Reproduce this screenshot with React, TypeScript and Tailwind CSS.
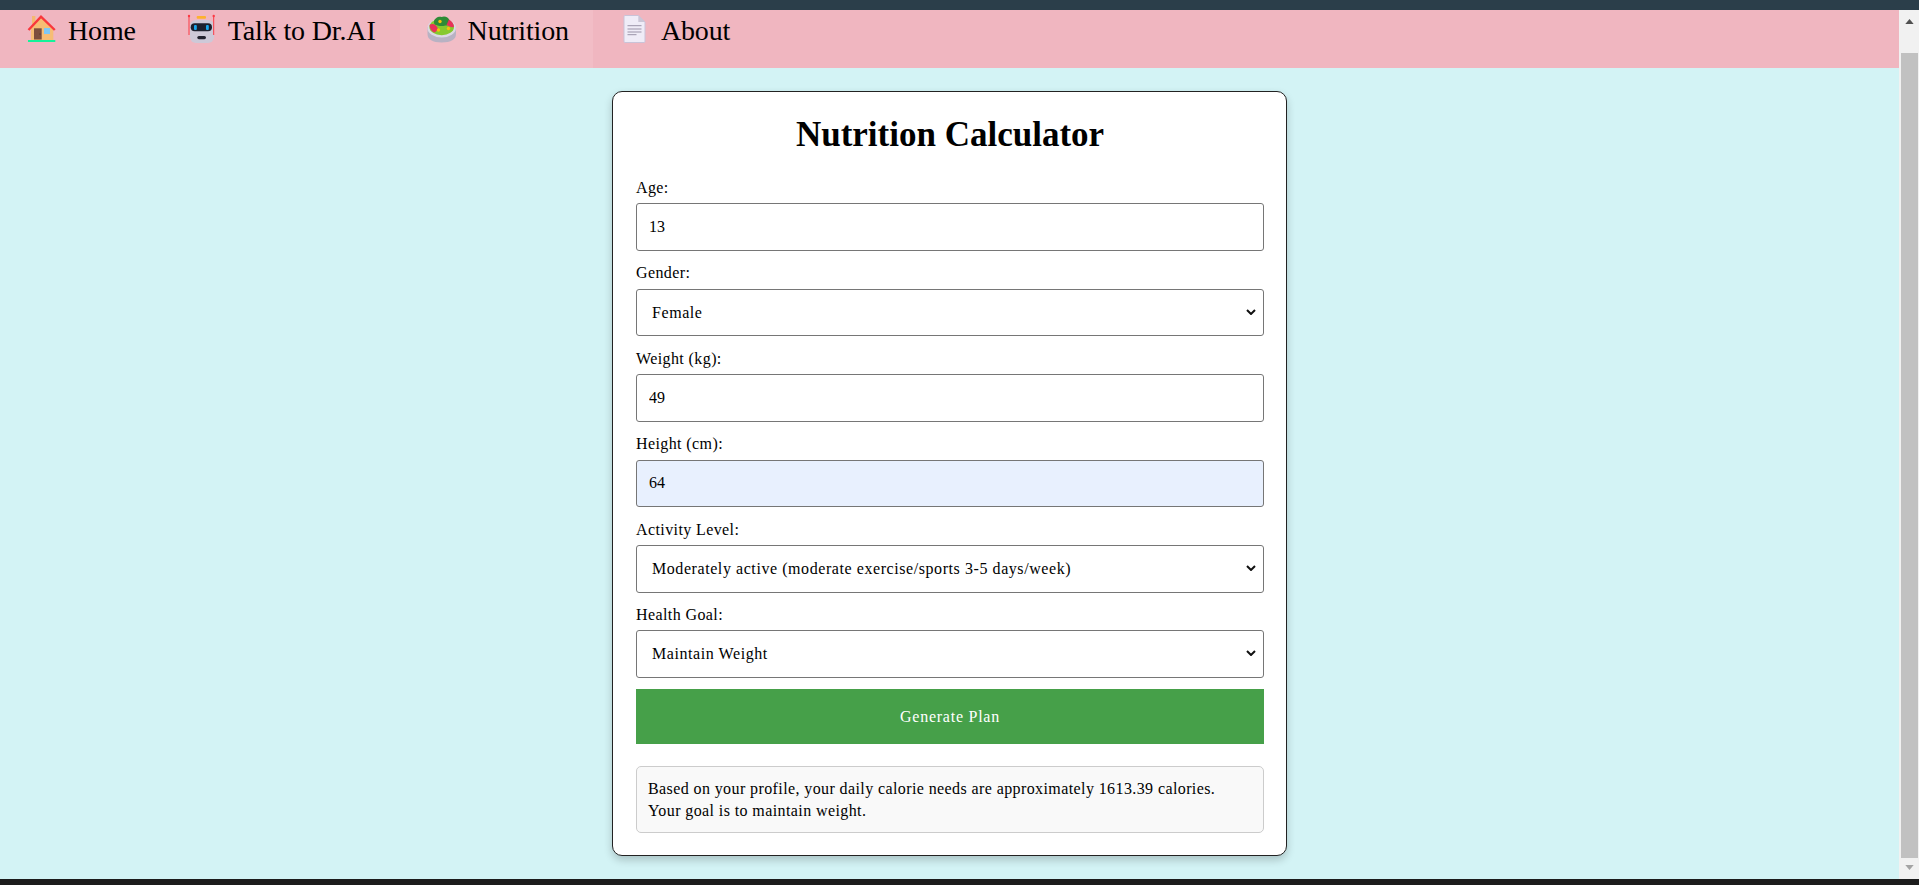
const serif = { fontFamily: '"Liberation Serif", "Times New Roman", serif' }

function HomeIcon() {
  return (
    <svg viewBox="0 0 30 30" className="w-[30px] h-[30px] shrink-0">
      <rect x="5" y="2" width="3.4" height="11" fill="#f4b870" />
      <path d="M14 2.7 26.3 14.3V26H4V14.3Z" fill="#f6bd74" />
      <rect x="7" y="14.3" width="7.7" height="11.2" fill="#7d4f3d" />
      <circle cx="13" cy="20" r="0.5" fill="#3d2418" />
      <rect x="17" y="14" width="6" height="6" fill="#7ec8f5" />
      <path d="M1.5 16 14 2.6 27.8 16" fill="none" stroke="#f9373c" strokeWidth="2.4" />
      <rect x="1" y="26" width="27.3" height="2" fill="#14f29a" />
    </svg>
  )
}

function RobotIcon() {
  return (
    <svg viewBox="0 0 30 30" className="w-[30px] h-[30px] shrink-0">
      <rect x="3" y="6" width="24" height="23" rx="6" fill="#cdc9d8" />
      <rect x="9.7" y="2" width="9.3" height="2.8" rx="1" fill="#fdb12f" />
      <path d="M2 2v19M26.7 2v19" stroke="#fb3a44" strokeWidth="1" />
      <circle cx="2" cy="2" r="1.2" fill="#fb3a44" />
      <circle cx="26.7" cy="2" r="1.2" fill="#fb3a44" />
      <rect x="3.7" y="9.3" width="21.3" height="8" rx="4" fill="#1d2230" />
      <rect x="7" y="11" width="2.8" height="5" rx="1" fill="#1aa8ee" />
      <rect x="19" y="11" width="2.8" height="5" rx="1" fill="#1aa8ee" />
      <rect x="10.3" y="22" width="8.7" height="3.2" rx="1.6" fill="#222230" />
    </svg>
  )
}

function SaladIcon() {
  return (
    <svg viewBox="0 0 30 30" className="w-[30px] h-[30px] shrink-0">
      <path d="M0.5 13h28.500v7c0 5.500-5 8.500-14.300 8.500S0.500 25.500 0.500 20Z" fill="#b8b2c3" />
      <ellipse cx="14.700" cy="14" rx="14.200" ry="9.500" fill="#dcd9e2" />
      <ellipse cx="14.700" cy="13" rx="12.300" ry="8.300" fill="#86c92e" />
      <path d="M7 8c0-4 5-6 7.500-5 3-1.500 7 0 8 3.500 1 2.500-1 5-4 5-4 1-7 0.500-9-0.500-2 0-2.500-1-2.500-3Z" fill="#2e8b36" />
      <path d="M2.500 11c2.500-2 7-1 8.500 4l-3 3.500C5 18 2.800 15 2.500 11Z" fill="#e8315a" />
      <path d="M19.500 11l2.500-5.500c3 1.500 4.800 4.500 5 7.500-2.500 0.500-5.500-0.500-7.500-2Z" fill="#e8315a" />
      <circle cx="13" cy="7.500" r="1.700" fill="#f4c20d" />
      <circle cx="11.500" cy="16" r="1.700" fill="#f4c20d" />
      <circle cx="21.500" cy="14.500" r="1.700" fill="#f4c20d" />
    </svg>
  )
}

function DocIcon() {
  return (
    <svg viewBox="0 0 30 30" className="w-[30px] h-[30px] shrink-0">
      <path d="M5 1.500h13.500L25 8v19.500a1 1 0 0 1-1 1H5a1 1 0 0 1-1-1V2.500a1 1 0 0 1 1-1Z" fill="#efecf7" stroke="#c9c3d8" strokeWidth="1" />
      <path d="M18.300 1.500V8H25Z" fill="#cbc6d6" />
      <path d="M7.500 11.700h14M7.500 15h14M7.500 18h14M7.500 20.700h9" stroke="#9a93a8" strokeWidth="1" />
    </svg>
  )
}

const navItems = [
  { label: 'Home', icon: <HomeIcon />, active: false },
  { label: 'Talk to Dr.AI', icon: <RobotIcon />, active: false },
  { label: 'Nutrition', icon: <SaladIcon />, active: true },
  { label: 'About', icon: <DocIcon />, active: false },
]

function Nav() {
  return (
    <nav className="flex h-[58px] shrink-0 bg-[#f0b6c0]">
      {navItems.map((item) => (
        <a
          key={item.label}
          className={`flex items-start gap-[11px] pl-[27px] pr-[24px] pt-[4px] text-[28px] leading-[34px] tracking-[-0.15px] text-black ${
            item.active ? 'bg-[#f2bdc6]' : ''
          }`}
        >
          {item.icon}
          <span>{item.label}</span>
        </a>
      ))}
    </nav>
  )
}

function Field({ label, children }: { label: string; children: React.ReactNode }) {
  return (
    <div className="mb-[13.5px]">
      <label className="block mb-[6px] text-base leading-[18.4px] tracking-[0.4px] text-black">{label}</label>
      {children}
    </div>
  )
}

const controlClass =
  'block w-full h-[47.5px] border border-[#767676] rounded-[3px] text-base text-black outline-none'

function TextField({ label, value, filled }: { label: string; value: string; filled?: boolean }) {
  return (
    <Field label={label}>
      <input
        type="text"
        defaultValue={value}
        className={`${controlClass} px-3 ${filled ? 'bg-[#e8f0fe]' : 'bg-white'}`}
      />
    </Field>
  )
}

function SelectField({ label, value }: { label: string; value: string }) {
  return (
    <Field label={label}>
      <div className="relative">
        <select
          defaultValue={value}
          className={`${controlClass} appearance-none pl-[15px] pr-8 bg-white tracking-[0.57px]`}
        >
          <option>{value}</option>
        </select>
        <svg
          viewBox="0 0 10 6"
          className="absolute right-[8px] top-[20px] w-[10px] h-[6px] pointer-events-none"
        >
          <path d="M1 1 5 5 9 1" fill="none" stroke="#111" strokeWidth="2" />
        </svg>
      </div>
    </Field>
  )
}

function Calculator() {
  return (
    <div className="w-[675px] mx-auto mt-[23px] pl-[23px] pr-[22px] pt-[24px] pb-[22px] bg-white border border-[#222] rounded-[10px] shadow-[0_4px_8px_rgba(0,0,0,0.2)]">
      <h2 className="text-[35px] leading-[37px] font-bold text-center text-black mb-[26px]">
        Nutrition Calculator
      </h2>
      <TextField label="Age:" value="13" />
      <SelectField label="Gender:" value="Female" />
      <TextField label="Weight (kg):" value="49" />
      <TextField label="Height (cm):" value="64" filled />
      <SelectField label="Activity Level:" value="Moderately active (moderate exercise/sports 3-5 days/week)" />
      <SelectField label="Health Goal:" value="Maintain Weight" />
      <button className="block w-full h-[55px] -mt-[2px] bg-[#46a049] text-white text-base tracking-[0.75px]">
        Generate Plan
      </button>
      <div className="mt-[22px] px-[11px] py-[10.5px] bg-[#f9f9f9] border border-[#ccc] rounded-[5px] text-base leading-[22px] tracking-[0.4px] text-black">
        Based on your profile, your daily calorie needs are approximately 1613.39 calories.
        <br />
        Your goal is to maintain weight.
      </div>
    </div>
  )
}

function Scrollbar() {
  return (
    <div className="w-5 shrink-0 flex flex-col items-center bg-[#f1f1f1]">
      <div className="h-[43px] w-full pt-[9px] flex justify-center">
        <svg viewBox="0 0 10 6" className="w-[9px] h-[5px]">
          <path d="M5 0 10 6H0Z" fill="#505050" />
        </svg>
      </div>
      <div className="flex-1 w-[17px] ml-[1px] bg-[#c1c1c1]" />
      <div className="h-[21px] w-full pt-[7px] flex justify-center">
        <svg viewBox="0 0 10 6" className="w-[9px] h-[5px]">
          <path d="M0 0H10L5 6Z" fill="#a3a3a3" />
        </svg>
      </div>
    </div>
  )
}

export default function App() {
  return (
    <div className="h-[885px] flex flex-col overflow-hidden bg-[#d3f3f5]" style={serif}>
      <div className="h-[10px] shrink-0 bg-[#2b3e4a]" />
      <div className="flex-1 min-h-0 flex">
        <div className="flex-1 min-w-0 flex flex-col">
          <Nav />
          <Calculator />
        </div>
        <Scrollbar />
      </div>
      <div className="h-[6px] shrink-0 bg-[#1c1c1c]" />
    </div>
  )
}
